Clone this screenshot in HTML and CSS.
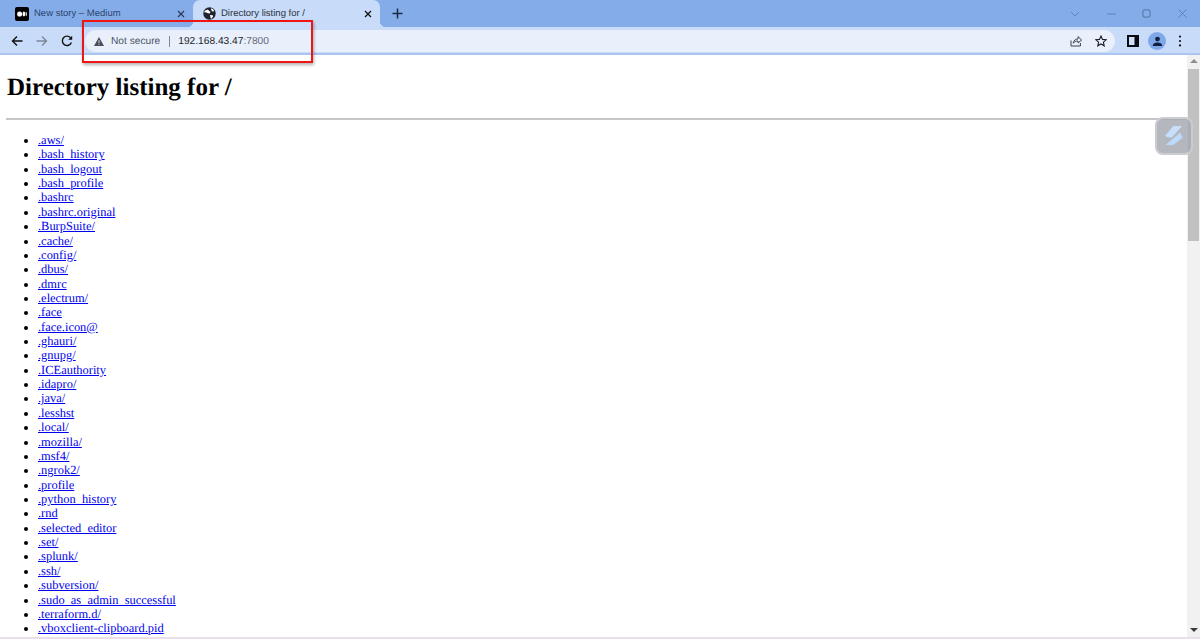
FILE: index.html
```html
<!DOCTYPE html>
<html lang="en">
<head>
<meta charset="utf-8">
<title>Directory listing for /</title>
<link rel="stylesheet" href="styles.css">
</head>
<body>
<div class="window">
  <header class="tabstrip">
    <div class="tab inactive">
      <span class="favicon"><svg viewBox="0 0 14 14" width="14" height="14"><rect width="14" height="14" rx="2" fill="#000"/><ellipse cx="4.6" cy="7" rx="2.5" ry="2.6" fill="#fff"/><ellipse cx="8.9" cy="7" rx="1.3" ry="2.4" fill="#fff"/><ellipse cx="11.2" cy="7" rx=".6" ry="2.2" fill="#fff"/></svg></span>
      <span class="tab-title">New story – Medium</span>
      <svg class="tab-close" viewBox="0 0 8 8" width="8" height="8"><path d="M1 1l6 6M7 1L1 7" stroke="#2b3a55" stroke-width="1.2"/></svg>
    </div>
    <div class="tab active">
      <span class="favicon"><svg viewBox="0 0 13 13" width="13" height="13"><circle cx="6.5" cy="6.5" r="6.2" fill="#1f2430"/><path d="M2.2 3.4l2.6-1 1.2 1.4L7.6 5 6.4 6.6 4.8 6.2 3.4 5.4 1 5.2zM8 1.2l2.4 1.2.8 1.8-1.8.2L8.2 3zM7 8l2.8.2.2 1.6L8 12 7.4 10z" fill="#fff"/></svg></span>
      <span class="tab-title">Directory listing for /</span>
      <svg class="tab-close" viewBox="0 0 8 8" width="8" height="8"><path d="M1 1l6 6M7 1L1 7" stroke="#111" stroke-width="1.3"/></svg>
    </div>
    <svg class="new-tab" viewBox="0 0 11 11" width="11" height="11"><path d="M5.5 .5v10M.5 5.5h10" stroke="#1c2a44" stroke-width="1.5"/></svg>
    <div class="window-controls">
      <svg viewBox="0 0 10 6" width="10" height="6"><path d="M1 1l4 4 4-4" fill="none" stroke="#6283bb" stroke-width="1"/></svg>
      <svg viewBox="0 0 10 2" width="9" height="2"><path d="M0 1h10" stroke="#5d7db0" stroke-width="1"/></svg>
      <svg viewBox="0 0 10 10" width="9" height="9"><rect x="1" y="1" width="8" height="8" rx="2" fill="none" stroke="#5d7db0" stroke-width="1.4"/></svg>
      <svg viewBox="0 0 10 10" width="9" height="9"><path d="M.5 .5l9 9M9.5 .5l-9 9" stroke="#5d7db0" stroke-width="1"/></svg>
    </div>
  </header>

  <nav class="toolbar">
    <div class="nav-buttons">
      <svg viewBox="0 0 12 12" width="12" height="12"><path d="M11.5 6H1.5M6 1.5L1.5 6 6 10.5" fill="none" stroke="#111" stroke-width="1.4"/></svg>
      <svg viewBox="0 0 12 12" width="12" height="12"><path d="M.5 6h10M6 1.5L10.5 6 6 10.5" fill="none" stroke="#7d8797" stroke-width="1.4"/></svg>
      <svg viewBox="0 0 12 12" width="12" height="12"><path d="M10.4 7.6A4.7 4.7 0 1 1 9.6 2.7" fill="none" stroke="#111" stroke-width="1.4"/><path d="M11.2 .8v4h-4z" fill="#111"/></svg>
    </div>
    <div class="omnibox">
      <svg class="warn" viewBox="0 0 10 9" width="10" height="9"><path d="M5 0l5 9H0z" fill="#4a4f57"/><path d="M5 3.2v2.8M5 6.8v1" stroke="#e9eefa" stroke-width=".9"/></svg>
      <span class="not-secure">Not secure</span>
      <span class="divider"></span>
      <span class="url">192.168.43.47<span class="port">:7800</span></span>
      <span class="omni-actions">
        <svg viewBox="0 0 12 12" width="12" height="12"><path d="M1 5.5V11h9.4V8" fill="none" stroke="#3c4350" stroke-width="1"/><path d="M3.2 8.2C3.6 5.4 5.6 4 8 4V1.6L11.6 5 8 8V6C6 6 4.5 6.6 3.2 8.2z" fill="none" stroke="#3c4350" stroke-width="1"/></svg>
        <svg viewBox="0 0 12 12" width="12" height="12"><path d="M6 1l1.5 3.4 3.7.4-2.8 2.4.8 3.6L6 9l-3.2 1.8.8-3.6L.8 4.8l3.7-.4z" fill="none" stroke="#1b1f27" stroke-width="1.1"/></svg>
      </span>
    </div>
    <div class="toolbar-actions">
      <svg viewBox="0 0 12 12" width="12" height="12"><rect width="12" height="12" fill="#0b0c10"/><rect x="2" y="2" width="5.5" height="8" fill="#cfe0fb"/></svg>
      <span class="avatar"><svg viewBox="0 0 12 12" width="11" height="11"><circle cx="6" cy="3.4" r="2.6" fill="#10213f"/><path d="M.8 11c0-3 2.6-4 5.2-4s5.2 1 5.2 4z" fill="#10213f"/></svg></span>
      <svg viewBox="0 0 4 12" width="4" height="12"><circle cx="2" cy="1.6" r="1.1" fill="#111"/><circle cx="2" cy="6" r="1.1" fill="#111"/><circle cx="2" cy="10.4" r="1.1" fill="#111"/></svg>
    </div>
  </nav>

  <div class="viewport">
    <main class="page">
      <h1>Directory listing for /</h1>
      <hr>
      <ul>
        <li><a href="#">.aws/</a></li>
        <li><a href="#">.bash_history</a></li>
        <li><a href="#">.bash_logout</a></li>
        <li><a href="#">.bash_profile</a></li>
        <li><a href="#">.bashrc</a></li>
        <li><a href="#">.bashrc.original</a></li>
        <li><a href="#">.BurpSuite/</a></li>
        <li><a href="#">.cache/</a></li>
        <li><a href="#">.config/</a></li>
        <li><a href="#">.dbus/</a></li>
        <li><a href="#">.dmrc</a></li>
        <li><a href="#">.electrum/</a></li>
        <li><a href="#">.face</a></li>
        <li><a href="#">.face.icon@</a></li>
        <li><a href="#">.ghauri/</a></li>
        <li><a href="#">.gnupg/</a></li>
        <li><a href="#">.ICEauthority</a></li>
        <li><a href="#">.idapro/</a></li>
        <li><a href="#">.java/</a></li>
        <li><a href="#">.lesshst</a></li>
        <li><a href="#">.local/</a></li>
        <li><a href="#">.mozilla/</a></li>
        <li><a href="#">.msf4/</a></li>
        <li><a href="#">.ngrok2/</a></li>
        <li><a href="#">.profile</a></li>
        <li><a href="#">.python_history</a></li>
        <li><a href="#">.rnd</a></li>
        <li><a href="#">.selected_editor</a></li>
        <li><a href="#">.set/</a></li>
        <li><a href="#">.splunk/</a></li>
        <li><a href="#">.ssh/</a></li>
        <li><a href="#">.subversion/</a></li>
        <li><a href="#">.sudo_as_admin_successful</a></li>
        <li><a href="#">.terraform.d/</a></li>
        <li><a href="#">.vboxclient-clipboard.pid</a></li>
      </ul>
    </main>
    <aside class="scrollbar">
      <span class="arrow up"></span>
      <span class="thumb"></span>
      <span class="track"></span>
      <span class="arrow down"></span>
    </aside>
    <div class="float-widget">
      <svg viewBox="0 0 34 34" width="34" height="34"><path d="M16.3 7.5h8L14.5 18.2 8.5 17z" fill="#c6e0fb" stroke="#c6e0fb" stroke-linejoin="round"/><path d="M23 14.2l2.2 4.4-9 7H9.5z" fill="#bcdaf9" stroke="#bcdaf9" stroke-linejoin="round"/></svg>
    </div>
  </div>
  <div class="bottom-edge"></div>
  <div class="highlight"></div>
</div>
</body>
</html>
```

FILE: styles.css
```css
* { box-sizing: border-box; }
html, body { margin: 0; height: 100%; overflow: hidden; background: #fff; }
.window {
  position: relative;
  width: 1200px;
  height: 639px;
  display: flex;
  flex-direction: column;
  font-family: "Liberation Sans", Arial, sans-serif;
  text-rendering: geometricPrecision;
}
.tabstrip {
  height: 27px;
  flex: none;
  background: #84ace9;
  display: flex;
  align-items: flex-end;
  padding-left: 8px;
}
.tab {
  height: 27px;
  display: flex;
  align-items: center;
  font-size: 9.5px;
  border-radius: 7px 7px 0 0;
}
.tab.inactive { color: #2d4570; width: 185px; padding: 0 8px 0 7px; }
.tab.active { position: relative; background: #c8dbf8; color: #2a3342; width: 187px; padding: 0 8px 0 10px; }
.tab.active::before,
.tab.active::after {
  content: "";
  position: absolute;
  bottom: 0;
  width: 6px;
  height: 6px;
}
.tab.active::before { left: -6px; background: radial-gradient(circle at 0 0, transparent 6px, #c8dbf8 6.5px); }
.tab.active::after { right: -6px; background: radial-gradient(circle at 100% 0, transparent 6px, #c8dbf8 6.5px); }
.favicon { display: flex; margin-right: 5px; flex: none; }
.tab-title { flex: 1; white-space: nowrap; }
.tab-close { flex: none; }
.new-tab { margin: 0 0 8px 12px; }
.window-controls {
  margin-left: auto;
  height: 27px;
  width: 130px;
  padding-right: 13px;
  display: flex;
  align-items: center;
  justify-content: space-between;
}
.toolbar {
  height: 26px;
  flex: none;
  background: #c8dbf8;
  display: flex;
  align-items: center;
  padding: 2px 0 0 11px;
}
.nav-buttons { display: flex; gap: 13px; width: 74px; flex: none; align-items: center; }
.omnibox {
  width: 1030px;
  height: 22px;
  background: #e9f0fc;
  border-radius: 11px;
  display: flex;
  align-items: center;
  padding-left: 9px;
  font-size: 10.2px;
  flex: none;
}
.warn { flex: none; margin-right: 7px; }
.not-secure { color: #4d5562; }
.divider { width: 1px; height: 11px; background: #7f8792; margin: 0 8px 0 9px; }
.url { color: #20242c; }
.port { color: #5f6773; }
.omni-actions { margin-left: auto; margin-right: 8px; display: flex; gap: 13px; align-items: center; }
.toolbar-actions { flex: none; display: flex; align-items: center; margin-left: 12px; }
.avatar {
  width: 18px;
  height: 18px;
  margin: 0 12px 0 9px;
  border-radius: 50%;
  background: #7fa8e8;
  display: flex;
  align-items: center;
  justify-content: center;
}
.viewport {
  position: relative;
  flex: 1;
  min-height: 0;
  display: flex;
  border-top: 2px solid #aac5ef;
}
.page {
  flex: 1;
  min-width: 0;
  overflow: hidden;
  font-family: "Liberation Serif", "Times New Roman", serif;
  padding: 0 6px;
  font-size: 12.45px;
  color: #000;
}
h1 {
  font-size: 25px;
  line-height: 29px;
  font-weight: 700;
  margin: 18px 0 0 1px;
}
hr {
  margin: 16px -6px 0 0;
  border: 0;
  height: 2px;
  background: #c6c6c6;
}
ul { margin: 13px 0 0; padding: 0 0 0 32px; }
li { height: 14.37px; line-height: 14.37px; white-space: nowrap; }
a { color: #0000ee; text-decoration: underline; }
.scrollbar {
  width: 13px;
  flex: none;
  background: #f1f1f1;
  display: flex;
  flex-direction: column;
  align-items: center;
}
.thumb { width: 11px; height: 172px; background: #c1c1c1; flex: none; }
.track { flex: 1; }
.arrow { width: 0; height: 0; border-left: 4px solid transparent; border-right: 4px solid transparent; flex: none; }
.arrow.up { border-bottom: 4px solid #8f8f8f; margin: 4px 0 6px; }
.arrow.down { border-top: 4px solid #3a3a3a; margin: 3px 0 5px; }
.float-widget {
  position: absolute;
  top: 62px;
  left: 1155px;
  width: 38px;
  height: 38px;
  border-radius: 8px;
  background: rgba(168,170,180,.85);
  border: 2px solid rgba(205,207,212,.9);
  display: flex;
  align-items: center;
  justify-content: center;
}
.bottom-edge { height: 2px; flex: none; background: #e8dfe8; }
.highlight {
  position: absolute;
  left: 82px;
  top: 20px;
  width: 231px;
  height: 43px;
  border: 2px solid #f01414;
  box-shadow: 1px 2px 3px rgba(0,0,0,.3);
}
```
